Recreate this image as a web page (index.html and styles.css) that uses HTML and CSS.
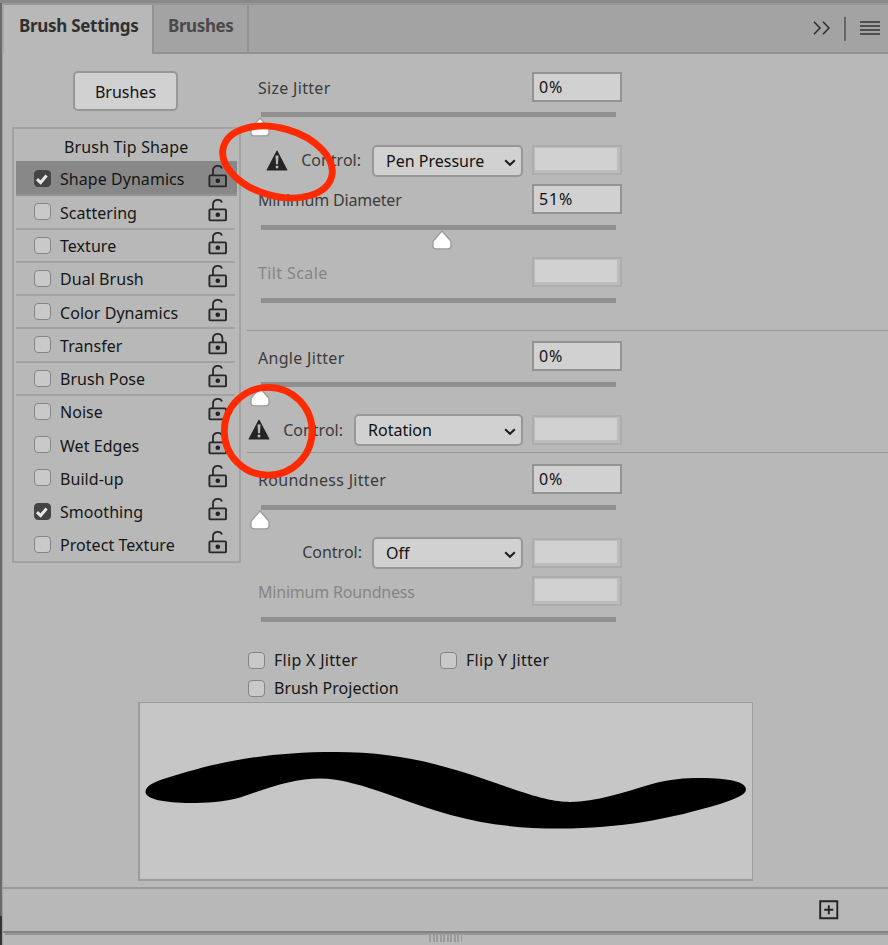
FILE: index.html
```
<!DOCTYPE html>
<html>
<head>
    <meta charset="utf-8">
    <title>Brush Settings</title>
    <link rel="stylesheet" href="styles.css">
</head>
<body>
    <!-- shared icons -->
    <svg class="defs">
        <symbol id="unlocked" viewBox="0 0 20 24">
            <rect x="1.4" y="11.4" width="16.6" height="11" rx="1" fill="#000" fill-opacity=".06" stroke="#282828" stroke-width="1.9"/>
            <path d="M5 11V6.5C5 .8 12.8 .6 14 4.6" fill="none" stroke="#282828" stroke-width="1.8"/>
            <circle cx="9.8" cy="16.8" r="2.3" fill="#222"/>
        </symbol>
        <symbol id="locked" viewBox="0 0 20 24">
            <rect x="1.4" y="11.4" width="16.6" height="11" rx="1" fill="#000" fill-opacity=".06" stroke="#282828" stroke-width="1.9"/>
            <path d="M5 11V7.5C5 1.3 14.4 1.3 14.4 7.5V11" fill="none" stroke="#282828" stroke-width="1.9"/>
            <circle cx="9.8" cy="16.8" r="2.3" fill="#222"/>
        </symbol>
        <symbol id="thumb" viewBox="0 0 20 20">
            <path d="M10 1L18.3 10.5Q19 11.5 19 12.5V16Q19 18.8 16 18.8H4Q1 18.8 1 16V12.5Q1 11.5 1.7 10.5Z" fill="#fff" stroke="#9b9b9b" stroke-width="1.3"/>
        </symbol>
        <symbol id="warning" viewBox="0 0 22 21">
            <path d="M11 1.2L20.8 20H1.2Z" fill="#242424" stroke="#242424" stroke-width="1.2" stroke-linejoin="round"/>
            <path d="M9.5 5.5H12.5L12 14.3H10Z" fill="#b8b8b8"/>
            <circle cx="11" cy="17" r="1.5" fill="#b8b8b8"/>
        </symbol>
        <symbol id="arrow" viewBox="0 0 12 8">
            <path d="M1.2 1.2L6 5.8L10.8 1.2" fill="none" stroke="#1c1c1c" stroke-width="2"/>
        </symbol>
        <symbol id="check" viewBox="0 0 14 14">
            <path d="M2 7.2L5.6 10.6L11.6 3.6" fill="none" stroke="#e8e8e8" stroke-width="3"/>
        </symbol>
    </svg>

    <div class="panel">
        <div class="tabs">
            <div class="tab active">Brush Settings</div>
            <div class="tab">Brushes</div>
            <div class="tab-tools">
                <svg width="18" height="14" viewBox="0 0 18 14"><path d="M1 .8L7 7L1 13.2M10 .8L16 7L10 13.2" fill="none" stroke="#2c2c2c" stroke-width="1.5"/></svg>
                <span class="divider"></span>
                <span class="menu"></span>
            </div>
        </div>

        <div class="main">
            <div class="sidebar">
                <button class="brushes">Brushes</button>
                <ul class="options">
                    <li class="title">Brush Tip Shape</li>
                    <li class="selected line"><span class="box checked"><svg><use href="#check"/></svg></span><span class="name">Shape Dynamics</span><svg class="lock"><use href="#unlocked"/></svg></li>
                    <li class="line"><span class="box"></span><span class="name">Scattering</span><svg class="lock"><use href="#unlocked"/></svg></li>
                    <li class="line"><span class="box"></span><span class="name">Texture</span><svg class="lock"><use href="#unlocked"/></svg></li>
                    <li class="line"><span class="box"></span><span class="name">Dual Brush</span><svg class="lock"><use href="#unlocked"/></svg></li>
                    <li class="line"><span class="box"></span><span class="name">Color Dynamics</span><svg class="lock"><use href="#unlocked"/></svg></li>
                    <li class="line"><span class="box"></span><span class="name">Transfer</span><svg class="lock"><use href="#locked"/></svg></li>
                    <li class="line"><span class="box"></span><span class="name">Brush Pose</span><svg class="lock"><use href="#unlocked"/></svg></li>
                    <li><span class="box"></span><span class="name">Noise</span><svg class="lock"><use href="#unlocked"/></svg></li>
                    <li><span class="box"></span><span class="name">Wet Edges</span><svg class="lock"><use href="#unlocked"/></svg></li>
                    <li><span class="box"></span><span class="name">Build-up</span><svg class="lock"><use href="#unlocked"/></svg></li>
                    <li><span class="box checked"><svg><use href="#check"/></svg></span><span class="name">Smoothing</span><svg class="lock"><use href="#unlocked"/></svg></li>
                    <li><span class="box"></span><span class="name">Protect Texture</span><svg class="lock"><use href="#unlocked"/></svg></li>
                </ul>
            </div>

            <div class="settings">
                <div class="group size">
                    <div class="param">
                        <div class="row"><label class="jitter">Size Jitter</label><span class="field">0%</span></div>
                        <div class="track"><svg class="thumb" style="left: 0%"><use href="#thumb"/></svg></div>
                    </div>
                    <div class="control">
                        <svg class="warning"><use href="#warning"/></svg>
                        <label>Control:</label>
                        <span class="select">Pen Pressure<svg class="arrow"><use href="#arrow"/></svg></span>
                        <span class="field disabled"></span>
                    </div>
                    <div class="param">
                        <div class="row"><label>Minimum Diameter</label><span class="field">51%</span></div>
                        <div class="track"><svg class="thumb" style="left: 51.2%"><use href="#thumb"/></svg></div>
                    </div>
                    <div class="param tilt">
                        <div class="row"><label class="off tilt-label">Tilt Scale</label><span class="field disabled"></span></div>
                        <div class="track"></div>
                    </div>
                </div>
                <div class="group angle">
                    <div class="param">
                        <div class="row"><label class="jitter">Angle Jitter</label><span class="field">0%</span></div>
                        <div class="track"><svg class="thumb" style="left: 0%"><use href="#thumb"/></svg></div>
                    </div>
                    <div class="control">
                        <svg class="warning"><use href="#warning"/></svg>
                        <label>Control:</label>
                        <span class="select wide">Rotation<svg class="arrow"><use href="#arrow"/></svg></span>
                        <span class="field disabled"></span>
                    </div>
                </div>
                <div class="group roundness">
                    <div class="param">
                        <div class="row"><label class="jitter">Roundness Jitter</label><span class="field">0%</span></div>
                        <div class="track"><svg class="thumb" style="left: 0%"><use href="#thumb"/></svg></div>
                    </div>
                    <div class="control">
                        <label>Control:</label>
                        <span class="select">Off<svg class="arrow"><use href="#arrow"/></svg></span>
                        <span class="field disabled"></span>
                    </div>
                    <div class="param">
                        <div class="row"><label class="off">Minimum Roundness</label><span class="field disabled"></span></div>
                        <div class="track"></div>
                    </div>
                </div>
                <div class="checks">
                    <div><span class="box"></span><span class="name jitter">Flip X Jitter</span></div>
                    <div><span class="box"></span><span class="name jitter">Flip Y Jitter</span></div>
                    <div><span class="box"></span><span class="name">Brush Projection</span></div>
                </div>
            </div>
        </div>

        <div class="preview">
            <svg width="612" height="176" viewBox="0 0 612 176">
                <path d="M5.5 89C5.5 83 14 79 25 75.5C70 61 120 49 195 49C265 49 310 64 367 84C398 95 415 99 430 99C455 99 485 89 512 81C530 76 545 75 560 75C590 75 606 79 606 86.5C606 92 594 96 580 101C530 116 480 125.5 420 125.5C350 125.5 310 114 250 92C225 83 200 75.5 180 75.5C155 75.5 130 84 100 94.5C85 99 65 100 50 100C25 100 5.5 96 5.5 89Z"/>
            </svg>
        </div>

        <div class="footer">
            <svg width="20" height="20" viewBox="0 0 20 20"><path d="M1.2 1.2H18.3V18.3H1.2ZM9.8 5.2V14.2M5.2 9.7H14.3" fill="none" stroke="#242424" stroke-width="1.9"/></svg>
        </div>
        <div class="grip"><span></span></div>
    </div>

    <!-- markers round the warnings -->
    <svg class="marks" width="888" height="945">
        <ellipse cx="277.5" cy="162" rx="56.1" ry="33.9" transform="rotate(15.7 277.5 162)"/>
        <circle cx="268.2" cy="431.2" r="43.9"/>
    </svg>
</body>
</html>
```
FILE: styles.css
```
* {
    box-sizing: border-box;
}
body {
    margin: 0;
    width: 888px;
    height: 945px;
    overflow: hidden;
    position: relative;
    background: #b8b8b8;
    font-family: "Noto Sans", "Open Sans", sans-serif;
    font-size: 16px;
    line-height: 22px;
    color: #161616;
}
.defs {
    display: none;
}
.panel {
    height: 945px;
    display: flex;
    flex-direction: column;
    padding-left: 2px;
    border-top: 3px solid #8a8a8a;
    background:
        linear-gradient(#6a6a6a 0 913px, #333 913px) 0 0 / 2px 100% no-repeat,
        linear-gradient(#a0a0a0, #a0a0a0) 2px 0 / 1px 100% no-repeat;
}

/* tabs */
.tabs {
    display: flex;
    height: 51px;
    border-top: 2px solid #979797;
    border-left: 2px solid #a6a6a6;
    background: #a3a3a3;
    font-weight: bold;
    font-size: 17px;
}
.tab {
    width: 95px;
    padding: 10px 0 0 14px;
    border-right: 2px solid #929292;
    border-bottom: 2px solid #929292;
    color: #4a4a4a;
    letter-spacing: -0.4px;
    white-space: nowrap;
}
.tab.active {
    width: 150px;
    padding-left: 15px;
    background: #b8b8b8;
    border-bottom: 0;
    color: #303030;
    letter-spacing: -0.3px;
}
.tab-tools {
    flex: 1;
    display: flex;
    justify-content: flex-end;
    align-items: center;
    border-bottom: 2px solid #929292;
    padding: 0 8px 2px 0;
}
.divider {
    width: 2px;
    height: 24px;
    margin: 2px 14px 0 13px;
    background: #666;
}
.menu {
    width: 20px;
    height: 14px;
    margin-top: 1px;
    background: repeating-linear-gradient(#505050 0 2px, transparent 2px 4px);
}

/* left column */
.main {
    display: flex;
    height: 648px;
    padding-left: 1px;
}
.sidebar {
    width: 244px;
    padding: 17px 0 0 9px;
}
.brushes {
    display: block;
    width: 105px;
    height: 40px;
    margin: 0 0 16px 61px;
    padding: 2px 0 0;
    border: 2px solid #979797;
    border-radius: 5px;
    background: #d1d1d1;
    font: inherit;
    color: #111;
}
.options {
    width: 229px;
    height: 436px;
    margin: 0;
    padding: 0 2px;
    border: 2px solid #a2a2a2;
    list-style: none;
    letter-spacing: 0.05px;
}
.options li {
    display: flex;
    align-items: center;
    height: 33.25px;
    margin-right: 2px;
    padding-left: 18px;
    border-bottom: 2px solid transparent;
}
.options .line {
    border-bottom-color: #a2a2a2;
}
.options .title {
    height: 32px;
    padding: 5px 0 0 48px;
    letter-spacing: 0.15px;
}
.options .selected {
    height: 35.25px;
    padding-top: 1px;
    margin-right: 0;
    background: #888;
    border-bottom-color: #939393;
}
.box {
    flex: none;
    width: 17px;
    height: 17px;
    border: 1.5px solid #858585;
    border-radius: 4px;
    background: #c9c9c9;
}
.box.checked {
    border-color: #444;
    background: #444;
}
.box svg {
    display: block;
    width: 14px;
    height: 14px;
    margin-top: 1px;
}
.name {
    margin: 2px 0 0 9px;
    white-space: nowrap;
}
.lock {
    width: 20px;
    height: 24px;
    margin: -4px 7px 0 auto;
}
.selected .lock {
    margin-right: 9px;
}

/* right column */
.settings {
    flex: 1;
    padding-top: 18px;
    color: #3c3c3c;
}
.group {
    border-bottom: 1px solid #989898;
}
.group.size {
    height: 259px;
}
.group.angle {
    height: 122px;
    padding-top: 10px;
}
.group.roundness {
    padding-top: 11px;
    border: 0;
}
.row {
    display: flex;
    justify-content: space-between;
    width: 375px;
    height: 30px;
    padding-left: 11px;
}
.row label {
    padding-top: 5px;
    letter-spacing: -0.2px;
}
.angle .row label {
    padding-top: 6px;
}
.off {
    color: #858585;
}
.row .tilt-label {
    letter-spacing: 0.4px;
}
.row .jitter,
.checks .jitter {
    letter-spacing: 0.3px;
}
.field {
    width: 90px;
    height: 30px;
    padding: 2px 5px;
    border: 2px solid #939393;
    background: #d1d1d1;
    color: #111;
    letter-spacing: 0.8px;
}
.field.disabled {
    border-color: #adadad;
    box-shadow: inset 0 0 0 1px #bcbcbc, inset -3px -3px 0 #bcbcbc;
}
.track {
    position: relative;
    width: 355px;
    height: 5px;
    margin: 11px 0 0 14px;
    background: #8f8f8f;
}
.size .param:first-child .track {
    margin-top: 10px;
}
.thumb {
    position: absolute;
    top: 5px;
    width: 20px;
    height: 20px;
    margin-left: -11px;
}
.control {
    display: flex;
    justify-content: flex-end;
    align-items: center;
    width: 375px;
    height: 32px;
    margin: 27px 0 7px;
}
.size .control {
    margin-top: 28px;
}
.size .control label,
.roundness .control label {
    margin-top: -2px;
}
.tilt {
    margin-top: 27px;
}
.control .field {
    margin: 0 0 0 9px;
}
.size .control .field {
    margin-top: -2px;
}
.warning {
    width: 22px;
    height: 21px;
    margin: -1px 13px 0 0;
}
.select {
    display: flex;
    justify-content: space-between;
    align-items: center;
    width: 151px;
    height: 32px;
    margin-left: 11px;
    padding: 0 5px 0 12px;
    border: 2px solid #979797;
    border-radius: 5px;
    background: #d1d1d1;
    color: #111;
}
.roundness .select {
    margin-left: 10px;
}
.select.wide {
    width: 169px;
}
.arrow {
    width: 12px;
    height: 8px;
    margin-top: 3px;
}
.checks {
    display: grid;
    grid-template-columns: 192px 192px;
    grid-auto-rows: 28px;
    margin: 24px 0 0 1px;
    color: #161616;
}
.checks div {
    display: flex;
    align-items: center;
    height: 28px;
}
.checks .name {
    margin-top: 0;
}

/* stroke preview */
.preview {
    flex: none;
    width: 615px;
    height: 179px;
    margin-left: 136px;
    border: solid #9c9c9c;
    border-width: 1px 1px 2px 2px;
    background: #c6c6c6;
}

/* bottom */
.footer {
    display: flex;
    justify-content: flex-end;
    align-items: center;
    height: 46px;
    margin: 6px 0 0 1px;
    padding-right: 49px;
    border: solid #999;
    border-width: 2px 0;
    border-bottom-color: #838383;
}
.grip {
    flex: 1;
    margin-left: 3px;
    padding-left: 424px;
    border-top: 2px solid #969696;
}
.grip span {
    display: block;
    width: 33px;
    height: 7px;
    background: repeating-linear-gradient(90deg, #9b9b9b 0 2px, transparent 2px 3.5px);
}
.marks {
    position: absolute;
    left: 0;
    top: 0;
    fill: none;
    stroke: #ff2a00;
    stroke-width: 6.8;
}
```
